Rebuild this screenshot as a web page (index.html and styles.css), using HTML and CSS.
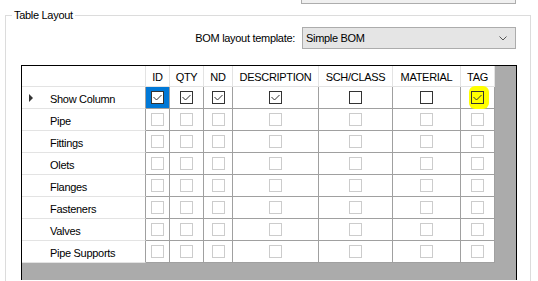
FILE: index.html
```html
<!DOCTYPE html>
<html lang="en">
<head>
  <meta charset="UTF-8">
  <title>Table Layout</title>
  <link rel="stylesheet" href="styles.css">
</head>
<body>
  <div class="topbox"></div>

  <div class="group">
    <span class="group-title">Table Layout</span>

    <div class="template-row">
      <label>BOM layout template:</label>
      <div class="combo">
        <span>Simple BOM</span>
        <svg width="8" height="5" viewBox="0 0 8 5"><path d="M0.5 0.5 L4 4 L7.5 0.5" fill="none" stroke="#555" stroke-width="1"/></svg>
      </div>
    </div>

    <div class="grid-frame">
      <div class="grid">
        <div class="hd"></div>
        <div class="hd">ID</div>
        <div class="hd">QTY</div>
        <div class="hd">ND</div>
        <div class="hd">DESCRIPTION</div>
        <div class="hd">SCH/CLASS</div>
        <div class="hd">MATERIAL</div>
        <div class="hd">TAG</div>

        <div class="rh"><span class="arrow"></span>Show Column</div>
        <div class="cell sel"><span class="cb"><svg width="11" height="11" viewBox="0 0 11 11"><polyline points="1.5,5 4.5,8 9.5,3" fill="none" stroke="#333" stroke-width="1"/></svg></span></div>
        <div class="cell"><span class="cb"><svg width="11" height="11" viewBox="0 0 11 11"><polyline points="1.5,5 4.5,8 9.5,3" fill="none" stroke="#333" stroke-width="1"/></svg></span></div>
        <div class="cell"><span class="cb"><svg width="11" height="11" viewBox="0 0 11 11"><polyline points="1.5,5 4.5,8 9.5,3" fill="none" stroke="#333" stroke-width="1"/></svg></span></div>
        <div class="cell"><span class="cb"><svg width="11" height="11" viewBox="0 0 11 11"><polyline points="1.5,5 4.5,8 9.5,3" fill="none" stroke="#333" stroke-width="1"/></svg></span></div>
        <div class="cell"><span class="cb"></span></div>
        <div class="cell"><span class="cb"></span></div>
        <div class="cell"><span class="marker"></span><span class="cb clear"><svg width="11" height="11" viewBox="0 0 11 11"><polyline points="1.5,5 4.5,8 9.5,3" fill="none" stroke="#333" stroke-width="1"/></svg></span></div>

        <div class="rh">Pipe</div>
        <div class="cell"><span class="cb off"></span></div><div class="cell"><span class="cb off"></span></div><div class="cell"><span class="cb off"></span></div><div class="cell"><span class="cb off"></span></div><div class="cell"><span class="cb off"></span></div><div class="cell"><span class="cb off"></span></div><div class="cell"><span class="cb off"></span></div>

        <div class="rh">Fittings</div>
        <div class="cell"><span class="cb off"></span></div><div class="cell"><span class="cb off"></span></div><div class="cell"><span class="cb off"></span></div><div class="cell"><span class="cb off"></span></div><div class="cell"><span class="cb off"></span></div><div class="cell"><span class="cb off"></span></div><div class="cell"><span class="cb off"></span></div>

        <div class="rh">Olets</div>
        <div class="cell"><span class="cb off"></span></div><div class="cell"><span class="cb off"></span></div><div class="cell"><span class="cb off"></span></div><div class="cell"><span class="cb off"></span></div><div class="cell"><span class="cb off"></span></div><div class="cell"><span class="cb off"></span></div><div class="cell"><span class="cb off"></span></div>

        <div class="rh">Flanges</div>
        <div class="cell"><span class="cb off"></span></div><div class="cell"><span class="cb off"></span></div><div class="cell"><span class="cb off"></span></div><div class="cell"><span class="cb off"></span></div><div class="cell"><span class="cb off"></span></div><div class="cell"><span class="cb off"></span></div><div class="cell"><span class="cb off"></span></div>

        <div class="rh">Fasteners</div>
        <div class="cell"><span class="cb off"></span></div><div class="cell"><span class="cb off"></span></div><div class="cell"><span class="cb off"></span></div><div class="cell"><span class="cb off"></span></div><div class="cell"><span class="cb off"></span></div><div class="cell"><span class="cb off"></span></div><div class="cell"><span class="cb off"></span></div>

        <div class="rh">Valves</div>
        <div class="cell"><span class="cb off"></span></div><div class="cell"><span class="cb off"></span></div><div class="cell"><span class="cb off"></span></div><div class="cell"><span class="cb off"></span></div><div class="cell"><span class="cb off"></span></div><div class="cell"><span class="cb off"></span></div><div class="cell"><span class="cb off"></span></div>

        <div class="rh">Pipe Supports</div>
        <div class="cell"><span class="cb off"></span></div><div class="cell"><span class="cb off"></span></div><div class="cell"><span class="cb off"></span></div><div class="cell"><span class="cb off"></span></div><div class="cell"><span class="cb off"></span></div><div class="cell"><span class="cb off"></span></div><div class="cell"><span class="cb off"></span></div>
      </div>
    </div>
  </div>
</body>
</html>
```

FILE: styles.css
```css
* {
  box-sizing: border-box;
}
html, body {
  overflow: hidden;
}
body {
  margin: 0;
  background-color: #fff;
  font-family: "Liberation Sans", Arial, sans-serif;
  font-size: 11px;
  letter-spacing: -0.3px;
  color: #000;
}
.topbox {
  margin-left: 301px;
  width: 215px;
  height: 4px;
  border: 1px solid #adadad;
  border-top: none;
  background-color: #f0f0f0;
}
.group {
  position: relative;
  margin: 11px 0 0 5px;
  width: 526px;
  height: 266px;
  border: 1px solid #dcdcdc;
  border-bottom: none;
}
.group-title {
  position: absolute;
  top: -8px;
  left: 6px;
  padding: 0 2px;
  line-height: 14px;
  background-color: #fff;
}
.template-row {
  display: flex;
  justify-content: flex-end;
  align-items: center;
  gap: 7px;
  margin-top: 11px;
  padding-right: 14px;
}
.combo {
  width: 214px;
  height: 22px;
  border: 1px solid #acacac;
  background-color: #e5e5e5;
  display: flex;
  align-items: center;
  justify-content: space-between;
  padding: 0 8px 0 3px;
}
.grid-frame {
  margin: 16px 0 0 15px;
  width: 496px;
  height: 215px;
  border: 1px solid #000;
  border-bottom: none;
  background-color: #ababab;
}
.grid {
  display: grid;
  grid-template-columns: 124px 24px 34px 29px 86px 74px 68px 34px;
  grid-template-rows: 21px repeat(8, 22px);
  width: max-content;
  background-color: #fff;
}
.hd {
  border-right: 1px solid #e3e3e3;
  border-bottom: 1px solid #e3e3e3;
  display: flex;
  align-items: center;
  justify-content: center;
  padding-top: 2px;
}
.rh {
  position: relative;
  border-right: 1px solid #a0a0a0;
  border-bottom: 1px solid #e3e3e3;
  display: flex;
  align-items: center;
  padding: 2px 0 0 28px;
}
.arrow {
  position: absolute;
  left: 7px;
  top: 7px;
  border-top: 4px solid transparent;
  border-bottom: 4px solid transparent;
  border-left: 4px solid #333;
}
.cell {
  position: relative;
  border-right: 1px solid #a0a0a0;
  border-bottom: 1px solid #a0a0a0;
  display: flex;
  align-items: center;
  justify-content: center;
}
.cell.sel {
  background-color: #0078d7;
}
.cb {
  position: relative;
  width: 13px;
  height: 13px;
  border: 1px solid #333;
  background-color: #fff;
}
.cb svg {
  display: block;
}
.cb.off {
  border-color: #ccc;
}
.cb.clear {
  background-color: transparent;
}
.marker {
  position: absolute;
  left: 8px;
  top: -1px;
  width: 20px;
  height: 23px;
  border-radius: 6px;
  background-color: #ffff00;
}
```
